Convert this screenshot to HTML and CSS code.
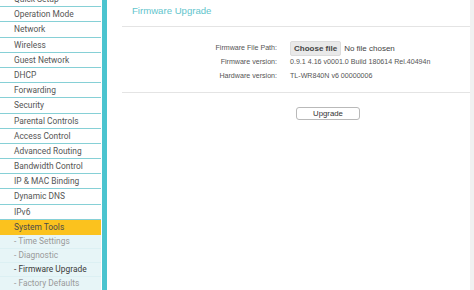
FILE: index.html
```html
<!DOCTYPE html>
<html>

<head>
    <meta name="viewport" content="width=device-width, initial-scale=1.0">
    <title>Firmware Upgrade</title>
    <link rel="stylesheet" href="styles.css">
</head>

<body>
    <div class="page">
        <!-- Menu de gauche -->
        <nav class="sidebar">
            <ul class="menu">
                <li>Quick Setup</li>
                <li>Operation Mode</li>
                <li>Network</li>
                <li>Wireless</li>
                <li>Guest Network</li>
                <li>DHCP</li>
                <li>Forwarding</li>
                <li>Security</li>
                <li>Parental Controls</li>
                <li>Access Control</li>
                <li>Advanced Routing</li>
                <li>Bandwidth Control</li>
                <li>IP &amp; MAC Binding</li>
                <li>Dynamic DNS</li>
                <li>IPv6</li>
                <li class="open">System Tools</li>
                <li class="sub">- Time Settings</li>
                <li class="sub">- Diagnostic</li>
                <li class="sub current">- Firmware Upgrade</li>
                <li class="sub">- Factory Defaults</li>
            </ul>
        </nav>
        <div class="rail"></div>

        <!-- Contenu principal -->
        <main class="content">
            <h1 class="title">Firmware Upgrade</h1>
            <div class="form">
                <div class="row">
                    <span class="label">Firmware File Path:</span>
                    <span class="value">
                        <span class="file-btn">Choose file</span>
                        <span class="file-name">No file chosen</span>
                    </span>
                </div>
                <div class="row">
                    <span class="label">Firmware version:</span>
                    <span class="value">0.9.1 4.16 v0001.0 Build 180614 Rel.40494n</span>
                </div>
                <div class="row">
                    <span class="label">Hardware version:</span>
                    <span class="value">TL-WR840N v6 00000006</span>
                </div>
            </div>
            <div class="actions">
                <button class="btn" type="button">Upgrade</button>
            </div>
        </main>
        <div class="scroll"></div>
    </div>
</body>

</html>
```

FILE: styles.css
```css
/* Style général */
body {
    margin: 0;
    padding: 0;
    background: #ffffff;
    font-family: 'Liberation Sans', Arial, sans-serif;
    color: #555;
    overflow: hidden;
}

.page {
    display: flex;
    height: 290px;
}

/* Menu */
.sidebar {
    width: 101px;
    margin-right: 1px;
    flex-shrink: 0;
}

.menu {
    list-style: none;
    margin: -8px 0 0;
    padding: 0;
    font-family: 'Roboto', sans-serif;
    font-size: 8.4px;
}

.menu li {
    height: 14.2px;
    line-height: 14.2px;
    padding-left: 14px;
    border-bottom: 1px solid #86d0d6;
    color: #555;
    white-space: nowrap;
}

.menu li.open {
    background: #fbc21e;
    color: #4a4a4a;
    border-bottom-color: #fbc21e;
}

.menu li.sub {
    height: 13px;
    line-height: 13px;
    background: #e7f5f7;
    color: #9a9a9a;
    border-bottom: 1px solid #dcf0f3;
}

.menu li.current {
    color: #3a3a3a;
}

.rail {
    width: 5px;
    background: #4bc4cf;
    flex-shrink: 0;
}

/* Contenu */
.content {
    flex: 1;
    margin-left: 15px;
}

.title {
    margin: 0;
    height: 26px;
    line-height: 22px;
    padding-left: 10px;
    font-size: 9.6px;
    font-weight: normal;
    color: #62c4cc;
    border-bottom: 1px solid #e4e4e4;
}

.form {
    padding: 14px 0 9px;
    border-bottom: 1px solid #e4e4e4;
    font-size: 7.1px;
}

.row {
    display: flex;
    align-items: center;
    height: 14px;
    gap: 13px;
}

.label {
    width: 155px;
    text-align: right;
}

.value {
    display: flex;
    align-items: center;
    gap: 3px;
}

.file-btn {
    background: #e9e9e9;
    border: 1px solid #dcdcdc;
    border-radius: 2px;
    padding: 0 3px;
    height: 13px;
    line-height: 13px;
    font-size: 8px;
    font-weight: bold;
    color: #444;
}

.file-name {
    font-size: 8px;
    color: #444;
}

.actions {
    display: flex;
    padding: 14px 0 0 174px;
}

.btn {
    width: 64px;
    height: 13px;
    padding: 0;
    background: #fff;
    border: 1px solid #b9b9b9;
    border-radius: 3px;
    font-family: 'Liberation Sans', Arial, sans-serif;
    font-size: 7.8px;
    color: #333;
}

.scroll {
    width: 4px;
    background: #f1f1f1;
    flex-shrink: 0;
}
```
